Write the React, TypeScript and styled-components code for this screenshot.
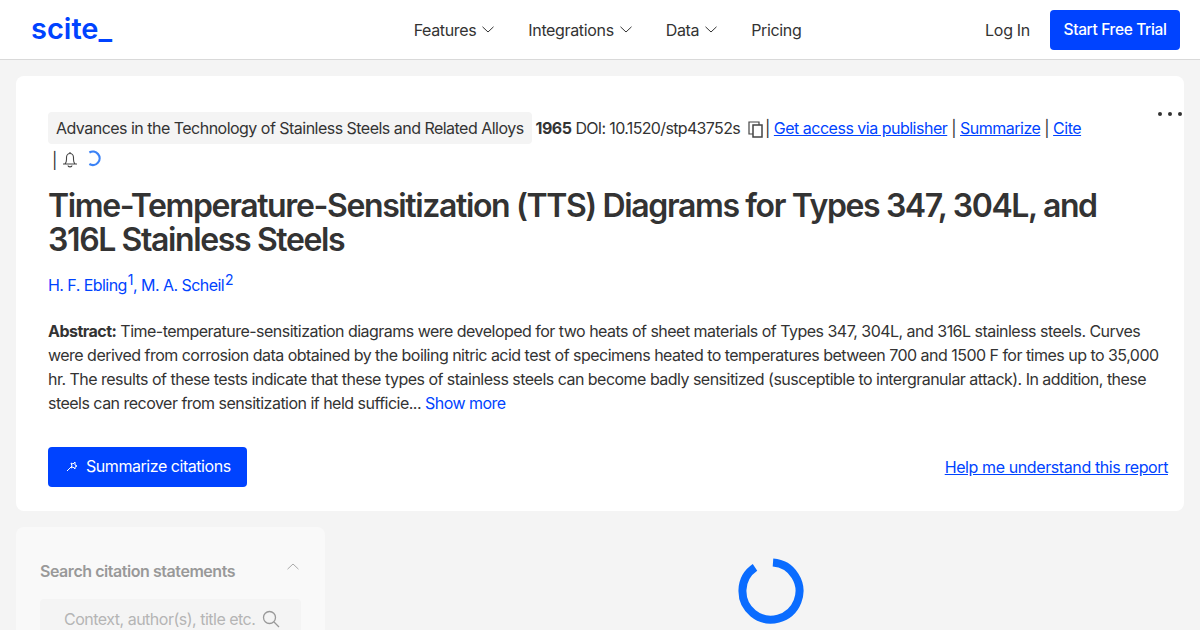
import React from "react";
import styled, { createGlobalStyle } from "styled-components";

const Global = createGlobalStyle`
  html, body { margin: 0; padding: 0; height: 630px; overflow: hidden; background: #f4f4f4; }
  body { font-family: Inter, "Liberation Sans", sans-serif; color: #333; }
  * { box-sizing: border-box; }
`;

const Header = styled.header`
  height: 60px; background: #fff; border-bottom: 1px solid #d9d9d9;
  display: grid; grid-template-columns: 1fr auto 1fr; align-items: center; padding: 0 20px 0 31px;
`;
const Logo = styled.div`
  font-weight: 600; font-size: 29px; color: #0043ff; letter-spacing: 0; line-height: 1; margin-top: -2px;
`;
const Nav = styled.nav`display: flex; align-items: center; gap: 34px; margin-left: 4px;`;
const NavItem = styled.a`
  display: flex; align-items: center; gap: 6px; font-size: 16px; letter-spacing: -0.35px; color: #333;
`;
const Right = styled.div`display: flex; justify-content: flex-end; align-items: center; gap: 20px;`;
const Login = styled.a`font-size: 16px; letter-spacing: -0.3px; color: #333;`;
const Trial = styled.button`
  height: 40px; width: 130px; border: 0; border-radius: 4px; background: #0043ff; color: #fff;
  font: 500 15.5px Inter, sans-serif; letter-spacing: -0.35px; padding: 0;
`;

const Page = styled.main`padding: 16px; display: flex; flex-direction: column; gap: 16px;`;
const Card = styled.section`
  position: relative; background: #fff; border-radius: 8px; height: 435px; padding: 36px 16px 0 32px;
`;
const More = styled.div`position: absolute; top: 36px; right: 2px; display: flex; gap: 6px;`;
const Dot = styled.span`width: 4px; height: 4px; border-radius: 50%; background: #333;`;

const Meta = styled.div`font-size: 16px; letter-spacing: -0.52px; line-height: 32px; color: #333; height: 76px; white-space: nowrap;`;
const Journal = styled.span`
  display: inline-block; background: #f4f4f4; border-radius: 4px; padding: 0 8px; height: 32px;
`;
const Year = styled.b`font-weight: 700;`;
const Doi = styled.span`letter-spacing: -0.65px;`;
const Link = styled.a`color: #0043ff; text-decoration: underline; letter-spacing: -0.5px;`;
const Plain = styled.span`color: #0043ff;`;
const Sep = styled.span`margin-left: 4px; margin-right: 1px;`;
const CopyIcon = styled.svg`display: inline-block; vertical-align: middle; margin: -2px 0 0 7px;`;
const BellIcon = styled.svg`display: inline-block; vertical-align: middle; margin: -4px 0 0 4px;`;
const SmallSpin = styled.svg`display: inline-block; vertical-align: middle; margin: -5px 0 0 8px;`;
const Title = styled.h1`
  margin: 0; font-size: 32px; font-weight: 600; line-height: 34px; letter-spacing: -1.38px; color: #333; padding-top: 1px;
`;
const Authors = styled.div`
  margin-top: 16px; font-size: 16px; letter-spacing: -0.55px; line-height: 24px; color: #0043ff;
  sup { font-size: 14px; line-height: 0; margin-left: 1px; }
`;
const Abstract = styled.p`
  margin: 22px 0 0; font-size: 16px; line-height: 24px; letter-spacing: -0.52px; color: #333;
  b { font-weight: 700; }
`;
const Actions = styled.div`display: flex; justify-content: space-between; align-items: center; margin-top: 32px;`;
const Summ = styled.button`
  height: 40px; width: 199px; border: 0; border-radius: 4px; background: #0043ff; color: #fff;
  display: flex; align-items: center; gap: 8px; padding: 0 0 2px 18px;
  font: 400 16px Inter, sans-serif; letter-spacing: -0.45px;
`;
const Help = styled(Link)`font-size: 16px; letter-spacing: -0.4px;`;

const Lower = styled.div`display: flex;`;
const Side = styled.aside`
  width: 309px; height: 200px; background: #f9f9f9; border-radius: 8px; padding: 32px 24px 0; flex: none;
`;
const SideHead = styled.div`display: flex; justify-content: space-between; align-items: flex-start;`;
const SideTitle = styled.h3`
  margin: 0; font-size: 16px; font-weight: 600; letter-spacing: -0.45px; line-height: 24px; color: #999;
`;
const Collapse = styled.svg`margin: 4px 2px 0 0;`;
const SearchBox = styled.div`
  margin-top: 16px; height: 40px; background: #f4f4f4; border-radius: 4px; display: flex; align-items: center;
  justify-content: space-between; padding: 0 21px 0 24px; font-size: 16px; letter-spacing: -0.5px; color: #b5b5b5; white-space: nowrap;
`;
const SpinWrap = styled.div`flex: 1; display: flex; justify-content: center; padding-top: 31px; padding-left: 33px;`;

const Chev = () => (
  <svg width="12" height="7" viewBox="0 0 12 7" fill="none" stroke="#333" strokeWidth="1"><path d="M.5.8L6 6l5.5-5.2" /></svg>
);

export default function App() {
  return (
    <>
      <Global />
      <Header>
        <Logo>scite_</Logo>
        <Nav>
          <NavItem>Features <Chev /></NavItem>
          <NavItem>Integrations <Chev /></NavItem>
          <NavItem>Data <Chev /></NavItem>
          <NavItem>Pricing</NavItem>
        </Nav>
        <Right>
          <Login>Log In</Login>
          <Trial>Start Free Trial</Trial>
        </Right>
      </Header>
      <Page>
        <Card>
          <More><Dot /><Dot /><Dot /></More>
          <Meta>
            <Journal>Advances in the Technology of Stainless Steels and Related Alloys</Journal>{" "}
            <Year>1965</Year> <Doi>DOI: 10.1520/stp43752s</Doi>
            <CopyIcon width="18" height="18" viewBox="0 0 18 18" fill="none" stroke="#444" strokeWidth="1.2">
              <path d="M6 14H2V2h10v3" /><rect x="6" y="5" width="9" height="12" strokeWidth="1.5" />
            </CopyIcon>
            {"| "}<Link>Get access via publisher</Link>{" | "}<Link>Summarize</Link>{" | "}<Link>Cite</Link>
            <br />
            <Sep>|</Sep>
            <BellIcon width="16" height="18" viewBox="0 0 16 18" fill="none" stroke="#444" strokeWidth="1.1">
              <path d="M8 1v1.6M3 13c1-1 1.5-2.5 1.5-4.5V6.5a3.5 4 0 0 1 7 0v2c0 2 .5 3.5 1.5 4.5zM1 13h14M6 14.5c0 1.8 4 1.8 4 0" />
            </BellIcon>
            <SmallSpin width="18" height="18" viewBox="0 0 16 16" fill="none" stroke="#3b82f6" strokeWidth="2">
              <path d="M3 2.2A6 6 0 1 1 3 12.5" />
            </SmallSpin>
          </Meta>
          <Title>Time-Temperature-Sensitization (TTS) Diagrams for Types 347, 304L, and 316L Stainless Steels</Title>
          <Authors>H. F. Ebling<sup>1</sup>, M. A. Scheil<sup>2</sup></Authors>
          <Abstract>
            <b>Abstract:</b> Time-temperature-sensitization diagrams were developed for two heats of sheet materials of Types 347, 304L, and 316L stainless steels. Curves were derived from corrosion data obtained by the boiling nitric acid test of specimens heated to temperatures between 700 and 1500 F for times up to 35,000 hr. The results of these tests indicate that these types of stainless steels can become badly sensitized (susceptible to intergranular attack). In addition, these steels can recover from sensitization if held sufficie... <Plain>Show more</Plain>
          </Abstract>
          <Actions>
            <Summ>
              <svg width="12" height="12" viewBox="0 0 12 12" fill="none" stroke="#fff" strokeWidth="1"><path d="M1 11l5-5M5 3l2 1 2-2v3l2 1-2 1v2L7 7 5 8l1-2z" /></svg>
              Summarize citations
            </Summ>
            <Help>Help me understand this report</Help>
          </Actions>
        </Card>
        <Lower>
          <Side>
            <SideHead>
              <SideTitle>Search citation statements</SideTitle>
              <Collapse width="12" height="7" viewBox="0 0 12 7" fill="none" stroke="#aaa" strokeWidth="1"><path d="M.5 6.2L6 1l5.5 5.2" /></Collapse>
            </SideHead>
            <SearchBox>
              Context, author(s), title etc.
              <svg width="18" height="18" viewBox="0 0 18 18" fill="none" stroke="#999" strokeWidth="1.3"><circle cx="7.5" cy="7.5" r="6" /><path d="M12 12l5 5" /></svg>
            </SearchBox>
          </Side>
          <SpinWrap>
            <svg width="66" height="66" viewBox="0 0 66 66" fill="none" stroke="#0a6cff" strokeWidth="8"><path d="M35 4.6A28.5 28.5 0 1 1 17 9.4" /></svg>
          </SpinWrap>
        </Lower>
      </Page>
    </>
  );
}
